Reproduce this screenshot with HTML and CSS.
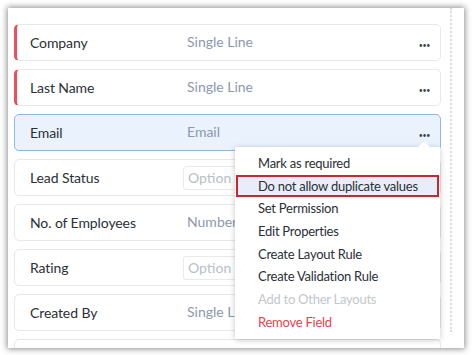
FILE: index.html
```html
<!DOCTYPE html>
<html>
<head>
<meta charset="utf-8">
<link rel="stylesheet" href="styles.css">
</head>
<body>
<div class="frame">
  <div class="panel">
    <div class="fields">
      <div class="row required">
        <span class="label">Company</span>
        <span class="ph">Single Line</span>
        <span class="more">•••</span>
      </div>
      <div class="row required">
        <span class="label">Last Name</span>
        <span class="ph">Single Line</span>
        <span class="more">•••</span>
      </div>
      <div class="row active">
        <span class="label">Email</span>
        <span class="ph">Email</span>
        <span class="more">•••</span>
      </div>
      <div class="row">
        <span class="label">Lead Status</span>
        <span class="select">Option 1</span>
      </div>
      <div class="row">
        <span class="label">No. of Employees</span>
        <span class="ph">Number</span>
      </div>
      <div class="row">
        <span class="label">Rating</span>
        <span class="select">Option 1</span>
      </div>
      <div class="row">
        <span class="label">Created By</span>
        <span class="ph">Single Line</span>
      </div>
      <div class="row"></div>
    </div>
    <div class="divider"></div>
  </div>
  <div class="menu">
    <div class="caret"></div>
    <div class="item">Mark as required</div>
    <div class="item selected">Do not allow duplicate values</div>
    <div class="item">Set Permission</div>
    <div class="item">Edit Properties</div>
    <div class="item">Create Layout Rule</div>
    <div class="item">Create Validation Rule</div>
    <div class="item disabled">Add to Other Layouts</div>
    <div class="item danger">Remove Field</div>
  </div>
</div>
</body>
</html>
```
FILE: styles.css
```css
* { box-sizing: border-box; }
html, body { margin: 0; padding: 0; background: #ffffff; }
body {
  width: 474px;
  height: 355px;
  overflow: hidden;
  font-family: Lato, "Open Sans", sans-serif;
}
.frame {
  position: relative;
  width: 474px;
  height: 355px;
  padding: 8px 10px 8px 8px;
}
.panel {
  height: 340px;
  background: #fff;
  box-shadow: 0 0 6px 1px rgba(0,0,0,0.45);
  display: flex;
  padding: 16px 0 0 6px;
  overflow: hidden;
}
.fields {
  width: 427px;
  display: flex;
  flex-direction: column;
  gap: 8px;
}
.row {
  flex: none;
  height: 37px;
  border: 1px solid #e6e8eb;
  border-radius: 5px;
  display: flex;
  align-items: center;
  padding: 0 10px 0 15px;
  position: relative;
  background: #fff;
}
.row.required { border-left: 3px solid #e9505b; padding-left: 13px; }
.row.active { background: #e9f2fd; border-color: #8fb7e6; }
.label {
  width: 157px;
  font-size: 14px;
  color: #2b2f36;
  letter-spacing: -0.1px;
}
.ph {
  font-size: 14px;
  color: #8d98ad;
  margin-top: -3px;
}
.select {
  font-size: 14px;
  color: #b9bec6;
  border: 1px solid #e8eaed;
  border-radius: 3px;
  height: 24px;
  line-height: 22px;
  padding: 0 4px;
  margin-left: -4px;
  width: 80px;
  overflow: hidden;
  white-space: nowrap;
}
.more {
  position: absolute;
  right: 10px;
  top: 16px;
  font-size: 7px;
  letter-spacing: -0.3px;
  color: #3b4452;
}
.divider {
  margin-left: 9px;
  width: 0;
  border-left: 2px dotted #dcdde0;
  height: 100%;
  margin-top: -16px;
}
.menu {
  position: absolute;
  left: 235px;
  top: 147px;
  width: 205px;
  height: 192px;
  background: #fff;
  box-shadow: 0 1px 6px rgba(0,0,0,0.22);
  padding-top: 5px;
}
.caret {
  position: absolute;
  right: 10px;
  top: -6px;
  width: 0;
  height: 0;
  border-left: 6px solid transparent;
  border-right: 6px solid transparent;
  border-bottom: 6px solid #fff;
}
.item {
  height: 22.7px;
  line-height: 22.7px;
  font-size: 13px;
  letter-spacing: -0.25px;
  color: #2b2f36;
  padding-left: 23px;
  white-space: nowrap;
}
.item.selected {
  background: #e8eef9;
  outline: 2px solid #d0232d;
  outline-offset: -2px;
  margin: 0 1px;
  padding-left: 22px;
}
.item.disabled { color: #c4c6ca; }
.item.danger { color: #e4434d; }
```
